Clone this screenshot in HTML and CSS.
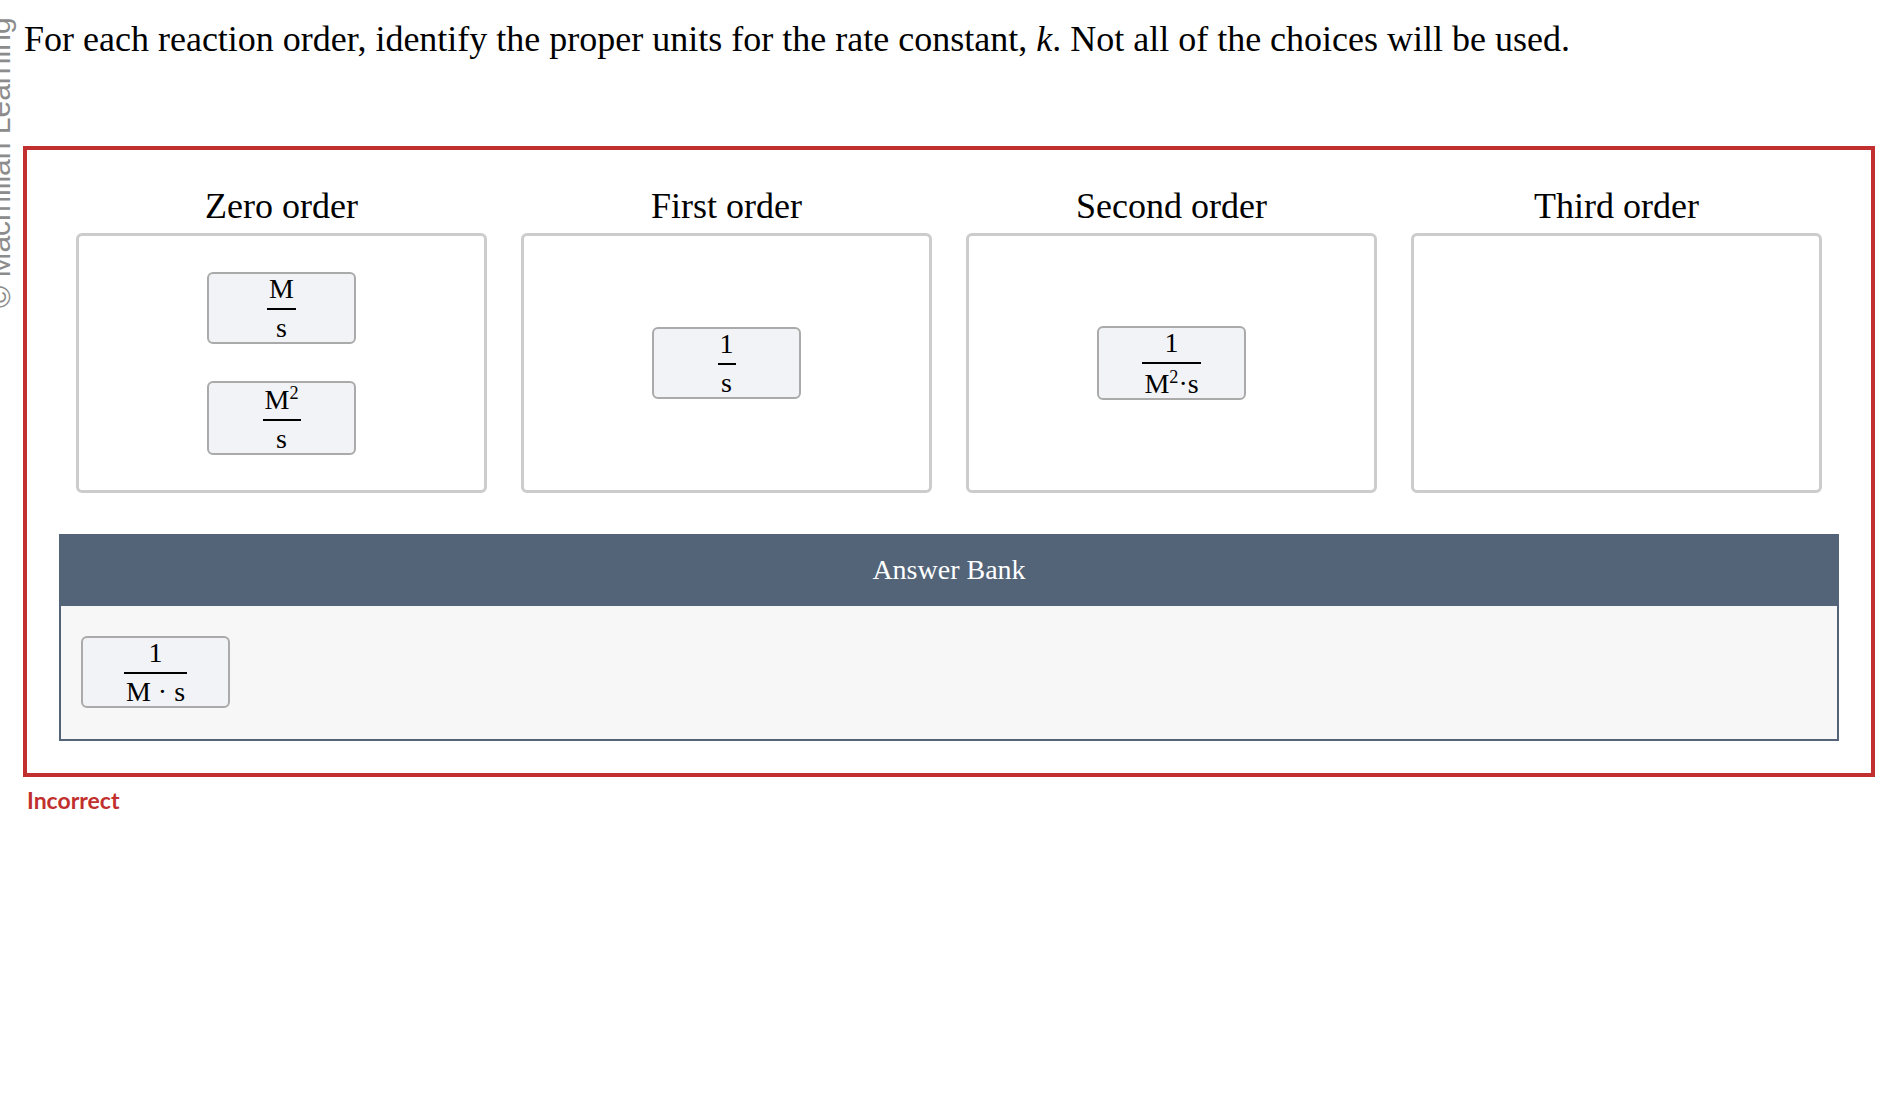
FILE: index.html
```html
<!DOCTYPE html>
<html lang="en">
<head>
  <meta charset="UTF-8" />
  <meta name="viewport" content="width=device-width, initial-scale=1.0" />
  <title>Rate constant units</title>
  <link rel="stylesheet" href="styles.css">
</head>
<body>
  <div class="watermark">© Macmillan Learning</div>

  <div class="page">
    <p class="prompt">For each reaction order, identify the proper units for the rate constant, <i>k</i>. Not all of the choices will be used.</p>

    <div class="question">
      <div class="bins">
        <div class="bin">
          <h2 class="bin-title">Zero order</h2>
          <div class="drop">
            <div class="chip"><span class="frac"><span class="num">M</span><span class="bar"></span><span class="den">s</span></span></div>
            <div class="chip"><span class="frac"><span class="num">M<sup>2</sup></span><span class="bar"></span><span class="den">s</span></span></div>
          </div>
        </div>

        <div class="bin">
          <h2 class="bin-title">First order</h2>
          <div class="drop">
            <div class="chip"><span class="frac"><span class="num">1</span><span class="bar"></span><span class="den">s</span></span></div>
          </div>
        </div>

        <div class="bin">
          <h2 class="bin-title">Second order</h2>
          <div class="drop">
            <div class="chip"><span class="frac"><span class="num">1</span><span class="bar"></span><span class="den">M<sup>2</sup>·s</span></span></div>
          </div>
        </div>

        <div class="bin">
          <h2 class="bin-title">Third order</h2>
          <div class="drop"></div>
        </div>
      </div>

      <div class="bank">
        <div class="bank-head">Answer Bank</div>
        <div class="bank-body">
          <div class="chip"><span class="frac"><span class="num">1</span><span class="bar"></span><span class="den">M · s</span></span></div>
        </div>
      </div>
    </div>

    <p class="status">Incorrect</p>
  </div>
</body>
</html>
```

FILE: styles.css
```css
body {
  margin: 0;
  font-family: "Liberation Serif", "Times New Roman", serif;
  color: #000;
  background: #fff;
}
.watermark {
  position: absolute;
  left: -15px;
  top: 308px;
  transform-origin: 0 0;
  transform: rotate(-90deg);
  font-family: "Liberation Sans", Arial, sans-serif;
  font-size: 30px;
  line-height: 30px;
  color: #8c8c8c;
  white-space: nowrap;
}
.page {
  padding: 0 5px 0 23px;
}
.prompt {
  margin: 18px 0 0 1px;
  font-size: 36px;
  line-height: 42px;
}
.question {
  margin-top: 86px;
  border: 4px solid #c1302e;
  padding: 36px 32px 32px;
}
.bins {
  display: grid;
  grid-template-columns: repeat(4, 1fr);
}
.bin-title {
  margin: 0;
  font-size: 36px;
  font-weight: normal;
  line-height: 40px;
  text-align: center;
}
.drop {
  margin: 7px 17px 0;
  height: 260px;
  box-sizing: border-box;
  border: 3px solid #ccc;
  border-radius: 6px;
  display: flex;
  flex-direction: column;
  align-items: center;
  justify-content: center;
  gap: 37px;
}
.bank {
  margin-top: 41px;
}
.bank-head {
  height: 72px;
  background: #536479;
  color: #fff;
  font-size: 28px;
  display: flex;
  align-items: center;
  justify-content: center;
}
.bank-body {
  background: #f7f7f7;
  border: 2px solid #536479;
  border-top: 0;
  padding: 30px 20px 31px;
  display: flex;
  gap: 20px;
}
.chip {
  width: 149px;
  box-sizing: border-box;
  border: 2px solid #aaa;
  border-radius: 6px;
  background: #f2f3f6;
  padding-top: 1px;
  display: flex;
  justify-content: center;
}
.frac {
  display: inline-flex;
  flex-direction: column;
  align-items: center;
  font-size: 28px;
  line-height: 28px;
}
.num, .den {
  padding: 0 2px;
  white-space: nowrap;
}
.num {
  padding-bottom: 5px;
}
.den {
  padding-top: 4px;
}
.bar {
  align-self: stretch;
  height: 2px;
  background: #000;
}
.frac sup {
  font-size: 0.65em;
  vertical-align: 0.55em;
  line-height: 1;
}
.status {
  margin: 10px 0 0 4px;
  font-family: Lato, "Liberation Sans", sans-serif;
  font-weight: bold;
  font-size: 23px;
  line-height: 1.2;
  color: #c1302e;
}
```
